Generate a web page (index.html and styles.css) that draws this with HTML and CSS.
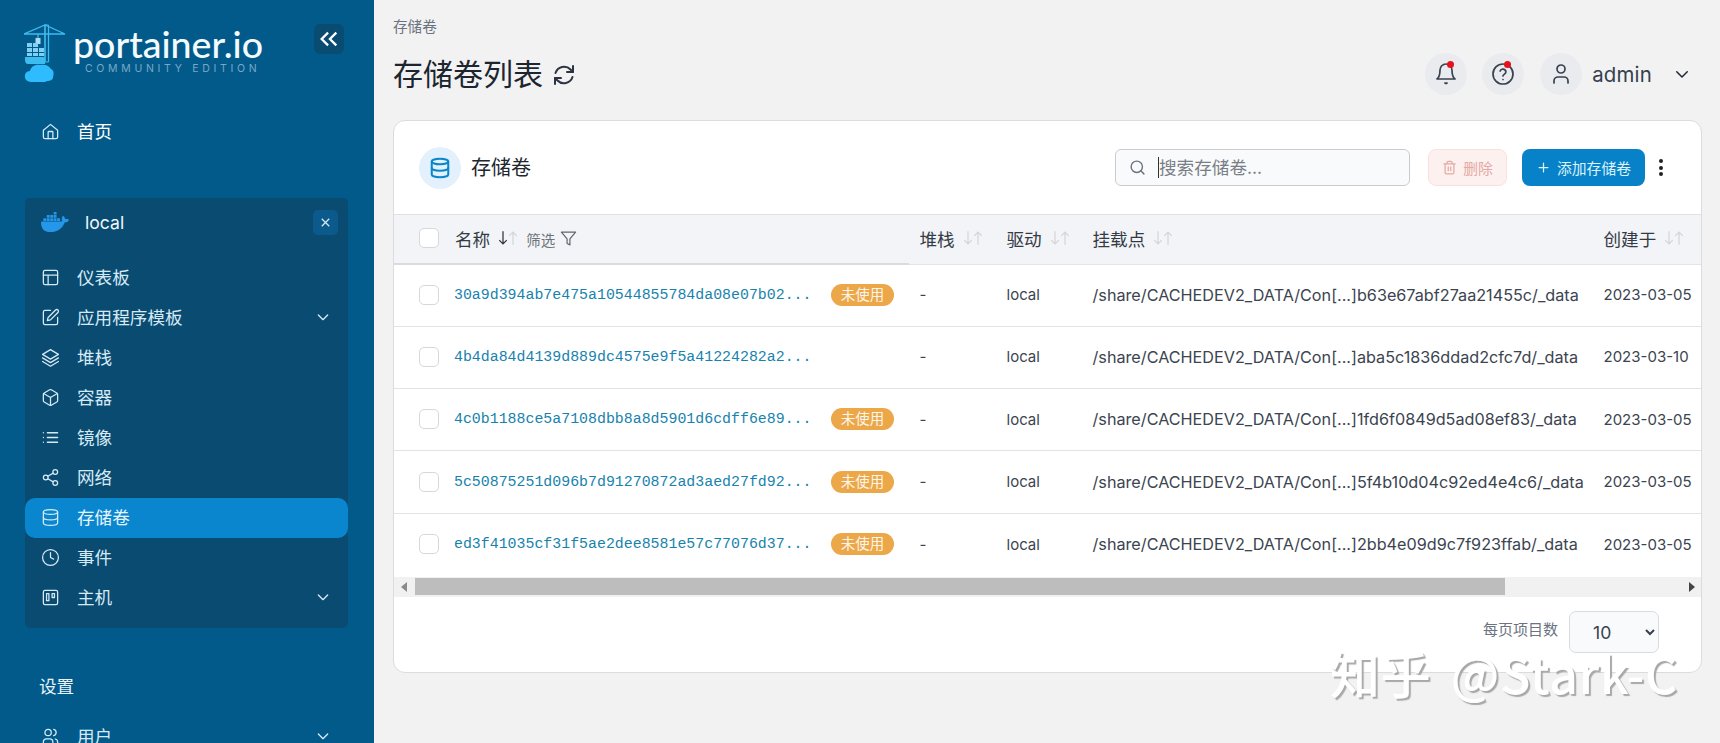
FILE: index.html
```html
<!DOCTYPE html>
<html lang="zh-CN">
<head>
<meta charset="utf-8">
<title>存储卷列表</title>
<link rel="stylesheet" href="styles.css">
</head>
<body>
<svg class="sprite" xmlns="http://www.w3.org/2000/svg">
  <symbol id="i-home" viewBox="0 0 24 24"><path d="M3 10.500 12 3l9 7.500V19a2 2 0 0 1-2 2H5a2 2 0 0 1-2-2z"/><path d="M9 21v-8a1 1 0 0 1 1-1h4a1 1 0 0 1 1 1v8"/></symbol>
  <symbol id="i-layout" viewBox="0 0 24 24"><rect x="3" y="3" width="18" height="18" rx="2"/><path d="M3 9h18M9 21V9"/></symbol>
  <symbol id="i-edit" viewBox="0 0 24 24"><path d="M12 3H5a2 2 0 0 0-2 2v14a2 2 0 0 0 2 2h14a2 2 0 0 0 2-2v-7"/><path d="M18.400 2.600a2.100 2.100 0 0 1 3 3L12 15l-4 1 1-4z"/></symbol>
  <symbol id="i-layers" viewBox="0 0 24 24"><path d="m12 2 10 6-10 6L2 8z"/><path d="m2 12.500 10 6 10-6"/><path d="m2 17 10 6 10-6"/></symbol>
  <symbol id="i-box" viewBox="0 0 24 24"><path d="M21 16V8a2 2 0 0 0-1-1.730l-7-4a2 2 0 0 0-2 0l-7 4A2 2 0 0 0 3 8v8a2 2 0 0 0 1 1.730l7 4a2 2 0 0 0 2 0l7-4A2 2 0 0 0 21 16z"/><path d="M3.300 7 12 12l8.700-5M12 22V12"/></symbol>
  <symbol id="i-list" viewBox="0 0 24 24"><path d="M8 6h13M8 12h13M8 18h13M3 6h.01M3 12h.01M3 18h.01"/></symbol>
  <symbol id="i-share" viewBox="0 0 24 24"><circle cx="18" cy="5" r="3"/><circle cx="6" cy="12" r="3"/><circle cx="18" cy="19" r="3"/><path d="m8.600 13.500 6.800 4M15.400 6.500l-6.800 4"/></symbol>
  <symbol id="i-db" viewBox="0 0 24 24"><ellipse cx="12" cy="5" rx="9" ry="3"/><path d="M3 5v14c0 1.700 4 3 9 3s9-1.300 9-3V5"/><path d="M3 12c0 1.700 4 3 9 3s9-1.300 9-3"/></symbol>
  <symbol id="i-clock" viewBox="0 0 24 24"><circle cx="12" cy="12" r="10"/><path d="M12 6v6l4 2"/></symbol>
  <symbol id="i-trello" viewBox="0 0 24 24"><rect x="3" y="3" width="18" height="18" rx="2"/><rect x="7" y="7" width="3" height="9"/><rect x="14" y="7" width="3" height="5"/></symbol>
  <symbol id="i-users" viewBox="0 0 24 24"><circle cx="9" cy="7" r="4"/><path d="M3 21v-2a4 4 0 0 1 4-4h4a4 4 0 0 1 4 4v2"/><path d="M16 3.100a4 4 0 0 1 0 7.800M21 21v-2a4 4 0 0 0-3-3.850"/></symbol>
  <symbol id="i-chev" viewBox="0 0 24 24"><path d="m5 9 7 7 7-7"/></symbol>
  <symbol id="i-down" viewBox="0 0 12 20"><path d="M6 2v15M1.500 12.500 6 17l4.500-4.500"/></symbol>
  <symbol id="i-up" viewBox="0 0 12 20"><path d="M6 18V3M1.500 7.500 6 3l4.500 4.500"/></symbol>
</svg>

<div class="app">
  <aside class="sidebar">
    <div class="brand">
      <div class="logo">
        <svg class="logo-mark" viewBox="0 0 42 58" xmlns="http://www.w3.org/2000/svg">
          <g fill="none" stroke="#3dbcf0" stroke-width="1.300">
            <path d="M0 10h41M0 10 21 1l20 9M21 0v38M24.500 4v34"/>
            <path d="M14 10v7"/>
          </g>
          <path d="M21 1h3.500v37H21z" fill="none" stroke="#3dbcf0"/>
          <rect x="11.500" y="14" width="5" height="6" fill="#a9dcf2"/>
          <g fill="#7fd0f2">
            <rect x="3" y="19" width="5" height="4"/><rect x="9" y="19" width="5" height="4"/>
            <rect x="3" y="24" width="5" height="4"/><rect x="9" y="24" width="5" height="4"/><rect x="15" y="24" width="5" height="4"/>
            <rect x="3" y="29" width="5" height="3"/><rect x="9" y="29" width="5" height="3"/><rect x="15" y="29" width="5" height="3"/>
          </g>
          <path d="M1 33h18c2 0 2 2 2 4v3H4c-3 0-3-3-3-7z" fill="#3dbcf0"/>
          <path d="M8 58c-4 0-8-2-7-7 .500-3 3-4 5-4 1-5 6-7 10-6 4-1 9 0 11 4 3 1 3 5 2 8 0 3-3 4-6 4-3 2-6 2-8 1-2 1-4 1-7 0z" fill="#2ebcff"/>
        </svg>
        <div class="logo-text">
          <div class="logo-name">portainer.io</div>
          <div class="logo-sub">COMMUNITY EDITION</div>
        </div>
      </div>
      <button class="collapse" type="button" aria-label="收起">
        <svg viewBox="0 0 24 24" class="collapse-icon"><path d="m11 5-7 7 7 7M20 5l-7 7 7 7"/></svg>
      </button>
    </div>

    <a class="nav-item nav-home"><svg class="ico"><use href="#i-home"/></svg><span>首页</span></a>

    <section class="env">
      <div class="env-head">
        <svg class="whale" viewBox="0 0 24 24" xmlns="http://www.w3.org/2000/svg"><path d="M13.983 11.078h2.119a.186.186 0 00.186-.185V9.006a.186.186 0 00-.186-.186h-2.119a.185.185 0 00-.185.185v1.888c0 .102.083.185.185.185m-2.954-5.43h2.118a.186.186 0 00.186-.186V3.574a.186.186 0 00-.186-.185h-2.118a.185.185 0 00-.185.185v1.888c0 .102.082.185.185.185m0 2.716h2.118a.187.187 0 00.186-.186V6.29a.186.186 0 00-.186-.185h-2.118a.185.185 0 00-.185.185v1.887c0 .102.082.185.185.186m-2.93 0h2.12a.186.186 0 00.184-.186V6.29a.185.185 0 00-.185-.185H8.1a.185.185 0 00-.185.185v1.887c0 .102.083.185.185.186m-2.964 0h2.119a.186.186 0 00.185-.186V6.29a.185.185 0 00-.185-.185H5.136a.186.186 0 00-.186.185v1.887c0 .102.084.185.186.186m5.893 2.715h2.118a.186.186 0 00.186-.185V9.006a.186.186 0 00-.186-.186h-2.118a.185.185 0 00-.185.185v1.888c0 .102.082.185.185.185m-2.93 0h2.12a.185.185 0 00.184-.185V9.006a.185.185 0 00-.184-.186h-2.12a.185.185 0 00-.184.185v1.888c0 .102.083.185.185.185m-2.964 0h2.119a.185.185 0 00.185-.185V9.006a.185.185 0 00-.184-.186h-2.12a.186.186 0 00-.186.186v1.887c0 .102.084.185.186.185m-2.92 0h2.12a.185.185 0 00.184-.185V9.006a.185.185 0 00-.184-.186h-2.12a.185.185 0 00-.184.185v1.888c0 .102.082.185.185.185M23.763 9.89c-.065-.051-.672-.51-1.954-.51-.338.001-.676.03-1.01.087-.248-1.7-1.653-2.53-1.716-2.566l-.344-.199-.226.327c-.284.438-.49.922-.612 1.43-.23.97-.09 1.882.403 2.661-.595.332-1.55.413-1.744.42H.751a.751.751 0 00-.75.748 11.376 11.376 0 00.692 4.062c.545 1.428 1.355 2.48 2.41 3.124 1.18.723 3.1 1.137 5.275 1.137.983.003 1.963-.086 2.93-.266a12.248 12.248 0 003.823-1.389c.98-.567 1.86-1.288 2.61-2.136 1.252-1.418 1.998-2.997 2.553-4.4h.221c1.372 0 2.215-.549 2.68-1.009.309-.293.55-.65.707-1.046l.098-.288z"/></svg>
        <span class="env-name">local</span>
        <button class="env-close" type="button" aria-label="关闭">
          <svg viewBox="0 0 24 24" class="close-icon"><path d="M6 6l12 12M18 6 6 18"/></svg>
        </button>
      </div>
      <nav class="env-nav">
        <a class="nav-item"><svg class="ico"><use href="#i-layout"/></svg><span>仪表板</span></a>
        <a class="nav-item"><svg class="ico"><use href="#i-edit"/></svg><span>应用程序模板</span><svg class="chev"><use href="#i-chev"/></svg></a>
        <a class="nav-item"><svg class="ico"><use href="#i-layers"/></svg><span>堆栈</span></a>
        <a class="nav-item"><svg class="ico"><use href="#i-box"/></svg><span>容器</span></a>
        <a class="nav-item"><svg class="ico"><use href="#i-list"/></svg><span>镜像</span></a>
        <a class="nav-item"><svg class="ico"><use href="#i-share"/></svg><span>网络</span></a>
        <a class="nav-item active"><svg class="ico"><use href="#i-db"/></svg><span>存储卷</span></a>
        <a class="nav-item"><svg class="ico"><use href="#i-clock"/></svg><span>事件</span></a>
        <a class="nav-item"><svg class="ico"><use href="#i-trello"/></svg><span>主机</span><svg class="chev"><use href="#i-chev"/></svg></a>
      </nav>
    </section>

    <div class="side-label">设置</div>
    <a class="nav-item nav-users"><svg class="ico"><use href="#i-users"/></svg><span>用户</span><svg class="chev"><use href="#i-chev"/></svg></a>
  </aside>

  <main class="main">
    <div class="crumb">存储卷</div>
    <header class="topbar">
      <div class="title-wrap">
        <h1 class="title">存储卷列表</h1>
        <svg class="refresh" viewBox="0 0 24 24"><path d="M21 3v6h-6"/><path d="M3 21v-6h6"/><path d="M3.500 10a9 9 0 0 1 15-3.500L21 9"/><path d="M20.500 14a9 9 0 0 1-15 3.500L3 15"/></svg>
      </div>
      <div class="user-tools">
        <span class="round-btn">
          <svg class="round-ico" viewBox="0 0 24 24"><path d="M18 8a6 6 0 0 0-12 0c0 7-3 9-3 9h18s-3-2-3-9"/><path d="M11 21a1.500 1.500 0 0 0 2 0"/></svg>
          <i class="dot"></i>
        </span>
        <span class="round-btn">
          <svg class="round-ico" viewBox="0 0 24 24"><circle cx="12" cy="12" r="10"/><path d="M9.100 9a3 3 0 0 1 5.800 1c0 2-3 2.500-3 4M12 17.500h.01"/></svg>
          <i class="dot"></i>
        </span>
        <span class="round-btn">
          <svg class="round-ico" viewBox="0 0 24 24"><circle cx="12" cy="7" r="4"/><path d="M5 21v-2a4 4 0 0 1 4-4h6a4 4 0 0 1 4 4v2"/></svg>
        </span>
        <span class="user-name">admin</span>
        <svg class="user-chev"><use href="#i-chev"/></svg>
      </div>
    </header>

    <section class="card">
      <div class="card-head">
        <div class="card-title">
          <span class="card-ico"><svg class="card-ico-svg"><use href="#i-db"/></svg></span>
          <span class="card-label">存储卷</span>
        </div>
        <div class="card-actions">
          <label class="search">
            <svg class="search-ico" viewBox="0 0 24 24"><circle cx="11" cy="11" r="8"/><path d="m21 21-4.300-4.300"/></svg>
            <i class="caret"></i>
            <input class="search-input" type="text" placeholder="搜索存储卷...">
          </label>
          <button class="btn btn-del" type="button">
            <svg class="btn-ico" viewBox="0 0 24 24"><path d="M3 6h18M19 6v14a2 2 0 0 1-2 2H7a2 2 0 0 1-2-2V6M8 6V4a2 2 0 0 1 2-2h4a2 2 0 0 1 2 2v2M10 11v6M14 11v6"/></svg>
            删除
          </button>
          <button class="btn btn-add" type="button">
            <svg class="btn-ico" viewBox="0 0 24 24"><path d="M12 5v14M5 12h14"/></svg>
            添加存储卷
          </button>
          <span class="kebab"><i></i><i></i><i></i></span>
        </div>
      </div>

      <div class="table-clip">
        <table class="table">
          <colgroup><col class="c-name"><col class="c-stack"><col class="c-driver"><col class="c-mount"><col class="c-created"></colgroup>
          <thead>
            <tr>
              <th class="th-name">
                <div class="name-cell">
                  <input class="check" type="checkbox" aria-label="全选">
                  <span>名称</span>
                  <span class="sort"><svg class="arrow dark"><use href="#i-down"/></svg><svg class="arrow"><use href="#i-up"/></svg></span>
                  <span class="filter">筛选</span>
                  <svg class="filter-ico" viewBox="0 0 24 24"><path d="M22 3H2l8 9.500V19l4 2v-8.500z"/></svg>
                </div>
              </th>
              <th><div class="th-in"><span>堆栈</span><span class="sort"><svg class="arrow"><use href="#i-down"/></svg><svg class="arrow"><use href="#i-up"/></svg></span></div></th>
              <th><div class="th-in"><span>驱动</span><span class="sort"><svg class="arrow"><use href="#i-down"/></svg><svg class="arrow"><use href="#i-up"/></svg></span></div></th>
              <th><div class="th-in"><span>挂载点</span><span class="sort"><svg class="arrow"><use href="#i-down"/></svg><svg class="arrow"><use href="#i-up"/></svg></span></div></th>
              <th><div class="th-in"><span>创建于</span><span class="sort"><svg class="arrow"><use href="#i-down"/></svg><svg class="arrow"><use href="#i-up"/></svg></span></div></th>
            </tr>
          </thead>
          <tbody>
            <tr>
              <td><div class="name-cell"><input class="check" type="checkbox" aria-label="选择"><a class="vol">30a9d394ab7e475a10544855784da08e07b02...</a><span class="badge">未使用</span></div></td>
              <td>-</td><td>local</td><td class="mount">/share/CACHEDEV2_DATA/Con[...]b63e67abf27aa21455c/_data</td><td>2023-03-05</td>
            </tr>
            <tr>
              <td><div class="name-cell"><input class="check" type="checkbox" aria-label="选择"><a class="vol">4b4da84d4139d889dc4575e9f5a41224282a2...</a></div></td>
              <td>-</td><td>local</td><td class="mount">/share/CACHEDEV2_DATA/Con[...]aba5c1836ddad2cfc7d/_data</td><td>2023-03-10</td>
            </tr>
            <tr>
              <td><div class="name-cell"><input class="check" type="checkbox" aria-label="选择"><a class="vol">4c0b1188ce5a7108dbb8a8d5901d6cdff6e89...</a><span class="badge">未使用</span></div></td>
              <td>-</td><td>local</td><td class="mount">/share/CACHEDEV2_DATA/Con[...]1fd6f0849d5ad08ef83/_data</td><td>2023-03-05</td>
            </tr>
            <tr>
              <td><div class="name-cell"><input class="check" type="checkbox" aria-label="选择"><a class="vol">5c50875251d096b7d91270872ad3aed27fd92...</a><span class="badge">未使用</span></div></td>
              <td>-</td><td>local</td><td class="mount">/share/CACHEDEV2_DATA/Con[...]5f4b10d04c92ed4e4c6/_data</td><td>2023-03-05</td>
            </tr>
            <tr>
              <td><div class="name-cell"><input class="check" type="checkbox" aria-label="选择"><a class="vol">ed3f41035cf31f5ae2dee8581e57c77076d37...</a><span class="badge">未使用</span></div></td>
              <td>-</td><td>local</td><td class="mount">/share/CACHEDEV2_DATA/Con[...]2bb4e09d9c7f923ffab/_data</td><td>2023-03-05</td>
            </tr>
          </tbody>
        </table>
      </div>

      <div class="hscroll">
        <span class="hs-btn"><i class="tri tri-l"></i></span>
        <div class="hs-track"><div class="hs-thumb"></div></div>
        <span class="hs-btn"><i class="tri tri-r"></i></span>
      </div>

      <div class="card-foot">
        <span class="per-page">每页项目数</span>
        <select class="page-select" aria-label="每页项目数"><option>10</option><option>25</option><option>50</option></select>
      </div>
    </section>
  </main>
</div>
<div class="watermark">知乎 @Stark-C</div>
</body>
</html>
```
FILE: styles.css
```css
* { box-sizing: border-box; }
html, body { margin: 0; height: 100%; overflow: hidden; }
body {
  font-family: Inter, "Noto Sans CJK SC", sans-serif;
  background: #f2f2f2;
  color: #1f2937;
}
.sprite { display: block; width: 0; height: 0; }
.app { display: flex; height: 743px; overflow: hidden; }
a { color: inherit; text-decoration: none; }
button { font-family: inherit; border: 0; cursor: pointer; }

/* sidebar */
.sidebar {
  width: 374px;
  flex: none;
  background: #025a8b;
  padding: 24px 26px 0 25px;
  overflow: hidden;
}
.brand { display: flex; justify-content: space-between; align-items: flex-start; height: 58px; margin-left: -1px; margin-right: 4px; }
.logo { display: flex; gap: 9px; }
.logo-mark { width: 42px; height: 58px; flex: none; }
.logo-text { padding-top: 2px; }
.logo-name { font-family: Lato, sans-serif; font-size: 37.500px; line-height: 36px; font-weight: 500; color: #f4fbff; width: 190px; white-space: nowrap; margin-left: -2px; }
.logo-sub { font-family: Inter, sans-serif; font-size: 10.500px; line-height: 14px; letter-spacing: 3.700px; color: #78a8c6; margin: 0 0 0 10px; white-space: nowrap; }
.collapse { width: 30px; height: 30px; border-radius: 6px; background: #0a4b72; padding: 4px; display: flex; }
.collapse-icon { width: 22px; height: 22px; fill: none; stroke: #fff; stroke-width: 2.500; }

.nav-item {
  display: flex;
  align-items: center;
  height: 40px;
  padding-left: 15.500px;
  padding-right: 17px;
  font-size: 17.600px;
  color: #d6eaf5;
  border-radius: 10px;
}
.nav-item span { margin-left: 17.500px; padding-bottom: 3px; }
.ico { width: 19px; height: 19px; flex: none; fill: none; stroke: #d6eaf5; stroke-width: 1.600; stroke-linecap: round; stroke-linejoin: round; margin-bottom: 2px; }
.chev { width: 16px; height: 16px; margin-left: auto; fill: none; stroke: #d6eaf5; stroke-width: 2; stroke-linecap: round; stroke-linejoin: round; margin-bottom: 2px; }
.nav-home { margin-top: 30px; color: #fff; }
.env {
  margin-top: 46px;
  background: #0a4b72;
  border-radius: 5px;
  height: 430px;
}
.env-head { height: 48px; display: flex; align-items: center; padding: 0 10px 0 16px; }
.whale { width: 28px; height: 28px; fill: #2497e8; flex: none; }
.env-name { margin-left: 16px; font-size: 17.600px; color: #f0f7fb; padding-top: 1px; }
.env-close { margin-left: auto; width: 25px; height: 25px; border-radius: 5px; background: #0c5a8b; padding: 5px; display: flex; }
.close-icon { width: 15px; height: 15px; fill: none; stroke: #d6eaf5; stroke-width: 2; }
.env-nav { margin-top: 12px; }
.active { background: #0a86cf; color: #e6f5fd; }
.side-label { margin-top: 45px; margin-left: 14px; font-size: 17.600px; line-height: 28px; color: #e8f3f9; }
.nav-users { margin-top: 16px; }

/* main */
.main { flex: 1; min-width: 0; padding: 0 18px 0 19px; }
.crumb { padding-top: 17px; font-size: 14.600px; line-height: 20px; color: #6b7280; }
.topbar { display: flex; justify-content: space-between; align-items: center; height: 44px; margin-top: 15px; margin-bottom: 24px; }
.title-wrap { display: flex; align-items: center; gap: 9px; }
.title { margin: 0; font-size: 30px; font-weight: 400; line-height: 44px; color: #1c2530; }
.refresh { width: 24px; height: 24px; fill: none; stroke: #2b3440; stroke-width: 2; stroke-linecap: round; stroke-linejoin: round; margin-top: 2px; }
.user-tools { display: flex; align-items: center; margin-right: 11px; }
.round-btn { position: relative; width: 42px; height: 42px; border-radius: 50%; background: #e9ebee; display: flex; align-items: center; justify-content: center; margin-right: 15px; }
.round-ico { width: 24px; height: 24px; fill: none; stroke: #39424f; stroke-width: 1.700; stroke-linecap: round; stroke-linejoin: round; }
.dot { position: absolute; top: 8px; left: 22px; width: 7px; height: 7px; border-radius: 50%; background: #e5111d; }
.round-btn:nth-child(2) { margin-right: 16px; }
.round-btn:nth-child(3) { margin-right: 10px; }
.user-name { font-size: 20.400px; color: #344050; letter-spacing: 0.200px; }
.user-chev { width: 18px; height: 18px; margin-left: 21px; fill: none; stroke: #1f2937; stroke-width: 2; stroke-linecap: round; stroke-linejoin: round; }

/* card */
.card { height: 553px; background: #fff; border: 1px solid #dcdcdc; border-radius: 12px; overflow: hidden; display: flex; flex-direction: column; }
.card-head { height: 94px; flex: none; display: flex; justify-content: space-between; align-items: center; padding: 0 0 0 25px; border-bottom: 1px solid #dfe1e5; }
.card-title { display: flex; align-items: center; gap: 10px; font-size: 20px; color: #20272f; }
.card-label { padding-bottom: 2px; }
.card-ico { width: 42px; height: 42px; border-radius: 50%; background: #e2f1fb; display: flex; align-items: center; justify-content: center; }
.card-ico-svg { width: 22px; height: 22px; fill: none; stroke: #0b86c9; stroke-width: 2.200; stroke-linecap: round; stroke-linejoin: round; }
.card-actions { display: flex; align-items: center; }
.search { width: 295px; height: 37px; border: 1px solid #c8ccd1; border-radius: 6px; background: #f9fafb; display: flex; align-items: center; padding-left: 13px; margin-right: 18px; }
.search-ico { width: 17px; height: 17px; flex: none; fill: none; stroke: #6b7280; stroke-width: 2; stroke-linecap: round; }
.caret { width: 1px; height: 21px; background: #333; margin-left: 12px; flex: none; }
.search-input { flex: 1; min-width: 0; border: 0; outline: 0; background: transparent; font-family: Inter, "Noto Sans CJK SC", sans-serif; font-size: 17.600px; padding: 0; }
.search-input::placeholder { color: #7a7f87; opacity: 1; }
.btn { height: 37px; border-radius: 8px; display: flex; align-items: center; justify-content: center; font-size: 14.800px; }
.btn-ico { width: 15px; height: 15px; fill: none; stroke: currentColor; stroke-width: 2; stroke-linecap: round; stroke-linejoin: round; flex: none; }
.btn-del { width: 79px; background: #fdf1f0; border: 1px solid #fbe0de; color: #e4a9a5; gap: 6px; margin-right: 15px; }
.btn-add { width: 123px; background: #0782c8; color: #dcf2fd; gap: 6px; }
.kebab { display: flex; flex-direction: column; gap: 2.500px; width: 4px; margin: 0 38px 0 14px; }
.kebab i { display: block; width: 4px; height: 4px; border-radius: 50%; background: #222; }

/* table */
.table-clip { overflow: hidden; height: 362px; flex: none; }
.table { width: 1521px; table-layout: fixed; border-collapse: collapse; }
.c-name { width: 515px; }
.c-stack { width: 87px; }
.c-driver { width: 86px; }
.c-mount { width: 511px; }
.c-created { width: 322px; }
th { height: 49px; padding: 0 0 2px 10.500px; background: #f3f4f7; font-weight: 400; font-size: 17.600px; color: #333b46; text-align: left; border-bottom: 1px solid #e2e4e8; }
.th-name { padding: 0 0 2px; border-bottom: 2px solid #d9dbdf; }
td { height: 62.300px; padding: 0 0 1px 10.500px; font-size: 15px; color: #3b4450; border-bottom: 1px solid #e1e3e6; white-space: nowrap; }
td:first-child { padding: 0 0 1px; }
tbody tr:last-child td { border-bottom: 0; }
td.mount { font-size: 16.200px; }
.name-cell { display: flex; align-items: center; padding-left: 25px; }
.check { appearance: none; width: 20px; height: 20px; margin: 0 16px 0 0; border: 1px solid #d5d8dc; border-radius: 5px; background: #fff; flex: none; }
.vol { font-family: "Liberation Mono", monospace; font-size: 14.900px; color: #1783ad; white-space: nowrap; margin-left: -1px; }
.badge { margin-left: 19.500px; width: 63px; height: 22px; border-radius: 11px; background: #eba748; color: #fdf5e8; font-size: 14.500px; line-height: 21px; text-align: center; flex: none; }
.th-in { display: flex; align-items: center; }
.sort { display: inline-flex; margin-left: 8px; }
.arrow { width: 10px; height: 18px; fill: none; stroke: #d2d5d9; stroke-width: 1.500; }
.arrow.dark { stroke: #2b3440; }
.filter { margin-left: 8px; margin-top: 3px; font-size: 14.500px; color: #6f747b; }
.filter-ico { width: 17px; height: 17px; margin-left: 5px; fill: none; stroke: #5f6670; stroke-width: 1.700; stroke-linejoin: round; }

/* fake horizontal scrollbar */
.hscroll { height: 20px; flex: none; display: flex; background: #f1f1f1; }
.hs-btn { width: 19px; flex: none; display: flex; align-items: center; justify-content: center; }
.tri { width: 0; height: 0; border-top: 5px solid transparent; border-bottom: 5px solid transparent; }
.tri-l { border-right: 6px solid #8a8a8a; }
.tri-r { border-left: 6px solid #444; }
.hs-track { flex: 1; padding: 1px 0 2px 2px; }
.hs-thumb { width: 1090px; height: 17px; background: #bdbdbd; }

.card-foot { flex: 1; display: flex; justify-content: flex-end; align-items: flex-start; padding: 14px 42px 0 0; gap: 11px; }
.per-page { font-size: 15px; line-height: 38px; color: #6b7280; }
.page-select { width: 90px; height: 42px; border: 1px solid #d8dbdf; border-radius: 7px; background: #f9fafb; font-family: Inter, sans-serif; font-size: 17.600px; color: #374151; padding-left: 19px; }

.watermark {
  position: absolute;
  left: 1330px;
  top: 640px;
  font-family: "Noto Sans CJK SC", sans-serif;
  font-size: 50px;
  font-weight: 500;
  line-height: 64px;
  letter-spacing: 0.800px;
  word-spacing: 7px;
  color: #fff;
  text-shadow: 2px 2px 1px #a8a8a8;
  white-space: nowrap;
}
```
